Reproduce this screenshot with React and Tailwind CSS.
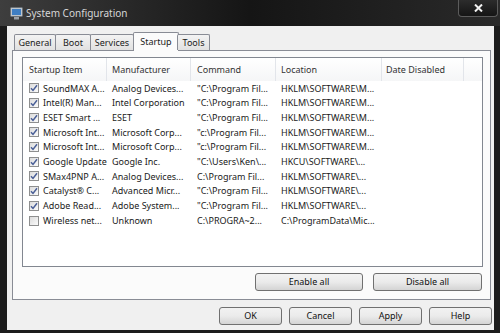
import React from "react";

const rows = [
  { on: true, item: "SoundMAX A...", maker: "Analog Devices...", cmd: "\"C:\\Program Fil...", loc: "HKLM\\SOFTWARE\\M..." },
  { on: true, item: "Intel(R) Man...", maker: "Intel Corporation", cmd: "\"C:\\Program Fil...", loc: "HKLM\\SOFTWARE\\M..." },
  { on: true, item: "ESET Smart ...", maker: "ESET", cmd: "\"C:\\Program Fil...", loc: "HKLM\\SOFTWARE\\M..." },
  { on: true, item: "Microsoft Int...", maker: "Microsoft Corp...", cmd: "\"c:\\Program Fil...", loc: "HKLM\\SOFTWARE\\M..." },
  { on: true, item: "Microsoft Int...", maker: "Microsoft Corp...", cmd: "\"c:\\Program Fil...", loc: "HKLM\\SOFTWARE\\M..." },
  { on: true, item: "Google Update", maker: "Google Inc.", cmd: "\"C:\\Users\\Ken\\...", loc: "HKCU\\SOFTWARE\\..." },
  { on: true, item: "SMax4PNP A...", maker: "Analog Devices...", cmd: "C:\\Program Fil...", loc: "HKLM\\SOFTWARE\\..." },
  { on: true, item: "Catalyst\u00ae C...", maker: "Advanced Micr...", cmd: "\"C:\\Program Fil...", loc: "HKLM\\SOFTWARE\\..." },
  { on: true, item: "Adobe Read...", maker: "Adobe System...", cmd: "\"C:\\Program Fil...", loc: "HKLM\\SOFTWARE\\..." },
  { on: false, item: "Wireless net...", maker: "Unknown", cmd: "C:\\PROGRA~2...", loc: "C:\\ProgramData\\Mic..." },
];

const tabs = [
  { label: "General", w: "w-[42px]" },
  { label: "Boot", w: "w-[36px]" },
  { label: "Services", w: "w-[44px]" },
  { label: "Startup", w: "w-[46px]", active: true },
  { label: "Tools", w: "w-[33px]" },
];

function Check({ on }) {
  return (
    <span className="w-[10px] h-[10px] shrink-0 border border-[#8e8f8f] bg-gradient-to-br from-[#dcdcdc] to-[#fbfbfb] flex items-center justify-center">
      {on && (
        <svg width="8" height="8" viewBox="0 0 8 8">
          <path d="M1 4.2 L3 6.4 L7 1.2" fill="none" stroke="#4a5f97" strokeWidth="1.5" />
        </svg>
      )}
    </span>
  );
}

function Btn({ children, className = "" }) {
  return (
    <button className={`h-[18px] rounded-[3px] border border-[#707070] bg-gradient-to-b from-[#f2f2f2] via-[#ebebeb] to-[#d4d4d4] text-[9px] text-[#111] flex items-center justify-center ${className}`}>
      {children}
    </button>
  );
}

export default function App() {
  return (
    <div className="w-[500px] h-[333px] overflow-hidden bg-[#1c1c1c] flex flex-col font-['Noto_Sans',sans-serif]">
      {/* title bar */}
      <div className="relative h-[26px] shrink-0 bg-gradient-to-r from-[#3e3e3e] via-[#151515] to-[#2a2a2a] flex items-center pl-[10px]">
        <svg width="13" height="13" viewBox="0 0 13 13" className="shrink-0">
          <rect x="0.5" y="0.5" width="12" height="9" rx="1" fill="#bfc6cc" stroke="#6b7278" />
          <rect x="2" y="2" width="9" height="6" fill="#3f7fc4" />
          <rect x="4" y="10" width="5" height="2.5" fill="#9aa1a8" />
        </svg>
        <span className="ml-[3px] text-[10px] text-[#d6d6d6]">System Configuration</span>
        <div className="absolute top-0 right-[2px] w-[40px] h-[17px] rounded-b-[4px] border border-t-0 border-[#5c5c5c] bg-gradient-to-b from-[#2c2c2c] to-[#151515] flex items-center justify-center">
          <svg width="9" height="8" viewBox="0 0 9 8">
            <path d="M1 0.5 L8 7.5 M8 0.5 L1 7.5" stroke="#f2f2f2" strokeWidth="2" />
          </svg>
        </div>
      </div>

      {/* client */}
      <div className="flex-1 ml-[7px] mr-[6px] mb-[3px] bg-[#f0f0f0] flex flex-col text-[9px] text-[#1a1a1a]">
        {/* tabs */}
        <div className="h-[24px] flex items-end pl-[7px] relative z-10">
          {tabs.map((t) =>
            t.active ? (
              <div key={t.label} className={`${t.w} -ml-[1px] -mr-[1px] h-[19px] -mb-px border border-b-0 border-[#898c95] bg-[#fbfbfb] rounded-t-[2px] flex items-center justify-center pb-[1px]`}>
                {t.label}
              </div>
            ) : (
              <div key={t.label} className={`${t.w} h-[16px] border border-b-0 border-[#898c95] -ml-px first:ml-0 bg-gradient-to-b from-[#f3f3f3] to-[#e1e1e1] rounded-t-[2px] flex items-center justify-center pt-[1px]`}>
                {t.label}
              </div>
            )
          )}
        </div>

        {/* tab page */}
        <div className="ml-[5px] mr-[3px] h-[250px] border border-[#898c95] bg-[#fbfbfb] flex flex-col pt-[6px] pl-[9px] pr-[7px]">
          <div className="h-[210px] border border-[#828790] bg-white flex flex-col">
            <div className="h-[23px] flex bg-gradient-to-b from-white to-[#f5f6f7] text-[#333]">
              <div className="w-[84px] pl-[6px] border-r border-[#e2e5ea] flex items-center">Startup Item</div>
              <div className="w-[84px] pl-[5px] border-r border-[#e2e5ea] flex items-center">Manufacturer</div>
              <div className="w-[85px] pl-[6px] border-r border-[#e2e5ea] flex items-center">Command</div>
              <div className="w-[106px] pl-[5px] border-r border-[#e2e5ea] flex items-center">Location</div>
              <div className="w-[82px] pl-[4px] border-r border-[#e2e5ea] flex items-center">Date Disabled</div>
              <div className="flex-1" />
            </div>
            <div>
              {rows.map((r, i) => (
                <div key={i} className="h-[14.7px] flex items-center whitespace-nowrap">
                  <div className="w-[84px] pl-[6px] flex items-center gap-[4px]">
                    <Check on={r.on} />
                    <span>{r.item}</span>
                  </div>
                  <div className="w-[84px] pl-[5px]">{r.maker}</div>
                  <div className="w-[85px] pl-[6px]">{r.cmd}</div>
                  <div className="w-[106px] pl-[5px]">{r.loc}</div>
                </div>
              ))}
            </div>
          </div>
          <div className="mt-[6px] flex justify-end gap-[10px] pr-[1px]">
            <Btn className="w-[108px]">Enable all</Btn>
            <Btn className="w-[109px]">Disable all</Btn>
          </div>
        </div>

        {/* dialog buttons */}
        <div className="mt-[7px] mr-[2px] flex justify-end gap-[7px]">
          <Btn className="w-[63px]">OK</Btn>
          <Btn className="w-[63px]">Cancel</Btn>
          <Btn className="w-[63px]">Apply</Btn>
          <Btn className="w-[63px]">Help</Btn>
        </div>
      </div>
    </div>
  );
}
